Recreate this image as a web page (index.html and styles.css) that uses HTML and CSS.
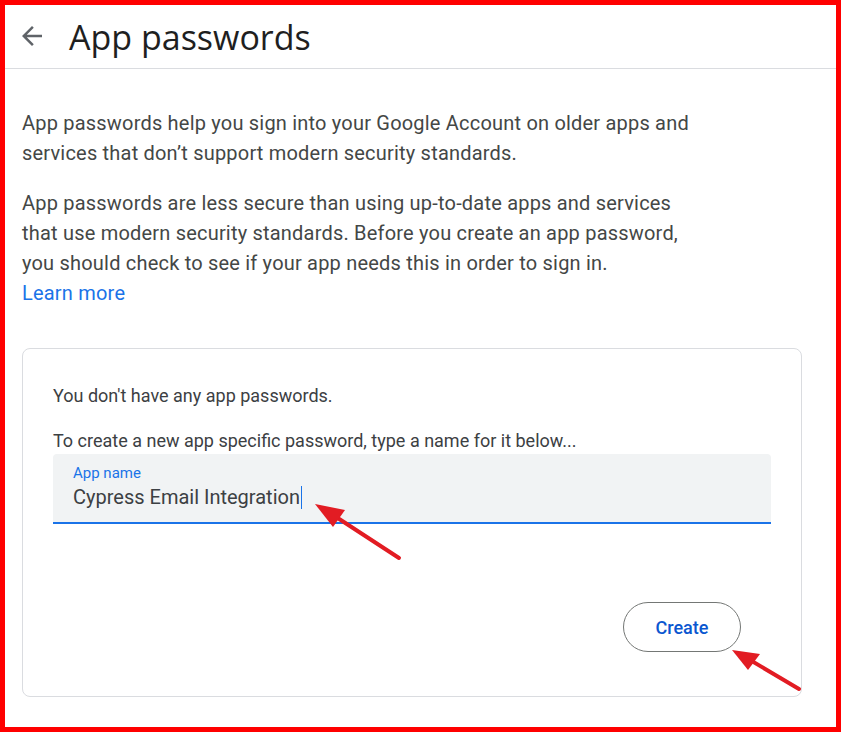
FILE: index.html
```html
<!DOCTYPE html>
<html lang="en">
<head>
<meta charset="utf-8">
<title>App passwords</title>
<link rel="stylesheet" href="styles.css">
</head>
<body>
<div class="frame">
  <header class="topbar">
    <button class="back" aria-label="Back">
      <svg viewBox="0 0 24 24" width="30" height="30"><path d="M20 11H7.83l5.59-5.59L12 4l-8 8 8 8 1.41-1.41L7.83 13H20v-2z" fill="#5f6368"/></svg>
    </button>
    <h1 class="title">App passwords</h1>
  </header>
  <main class="content">
    <p class="intro">App passwords help you sign into your Google Account on older apps and services that don’t support modern security standards.</p>
    <p class="intro">App passwords are less secure than using up-to-date apps and services that use modern security standards. Before you create an app password, you should check to see if your app needs this in order to sign in.<br><a class="link" href="#">Learn more</a></p>
    <section class="card">
      <p class="card-text">You don't have any app passwords.</p>
      <p class="card-text hint">To create a new app specific password, type a name for it below...</p>
      <div class="field">
        <label class="field-label">App name</label>
        <div class="field-value">Cypress Email Integration<span class="caret"></span></div>
      </div>
      <div class="actions">
        <button class="create">Create</button>
      </div>
    </section>
  </main>
  <svg class="annot" width="841" height="732" viewBox="0 0 841 732">
    <g stroke="#e21c23" stroke-width="4" stroke-linecap="round" fill="#e21c23">
      <line x1="399" y1="558" x2="330" y2="513"/>
      <line x1="799" y1="689" x2="745" y2="657"/>
    </g>
    <g fill="#e21c23">
      <polygon points="315,504 345,510 333,527"/>
      <polygon points="732,650 760,654 748,670"/>
    </g>
  </svg>
</div>
</body>
</html>
```
FILE: styles.css
```css
* { box-sizing: border-box; }
html, body { margin: 0; padding: 0; background: #fff; }
body { font-family: Roboto, "Liberation Sans", Arial, sans-serif; color: #1f1f1f; }
.frame {
  position: relative;
  width: 841px;
  height: 732px;
  border: 5px solid #ff0000;
  overflow: hidden;
}
.topbar {
  height: 64px;
  display: flex;
  align-items: center;
  border-bottom: 1px solid #dadce0;
  padding-left: 12px;
}
.back {
  border: 0;
  background: none;
  padding: 0;
  width: 30px;
  height: 30px;
  display: flex;
  margin-top: -1px;
}
.title {
  margin: 0 0 0 22px;
  font-family: "Open Sans", Roboto, sans-serif;
  font-size: 34px;
  font-weight: 400;
  color: #1f1f1f;
}
.content { padding: 39px 34px 0 17px; }
.intro {
  margin: 0 0 20px;
  font-size: 20px;
  line-height: 30px;
  letter-spacing: 0.2px;
  color: #444746;
  max-width: 690px;
}
.link { text-decoration: none; color: #1a73e8; }
.card {
  margin-top: 40px;
  height: 349px;
  border: 1px solid #dadce0;
  border-radius: 8px;
  padding: 35px 30px 0 30px;
}
.card-text {
  margin: 0;
  font-size: 18px;
  line-height: 24px;
  color: #3c4043;
}
.hint { margin-top: 21px; }
.field {
  margin-top: 1px;
  height: 70px;
  background: #f1f3f4;
  border-bottom: 2px solid #1a73e8;
  border-radius: 4px 4px 0 0;
  padding: 10px 20px 0;
}
.field-label {
  display: block;
  font-size: 15px;
  line-height: 18px;
  color: #1a73e8;
}
.field-value {
  margin-top: 2px;
  font-size: 20px;
  line-height: 26px;
  color: #3c4043;
}
.caret {
  display: inline-block;
  width: 1px;
  height: 23px;
  background: #1a73e8;
  vertical-align: -5px;
  margin-left: 1px;
}
.actions {
  display: flex;
  justify-content: flex-end;
  padding-right: 30px;
  margin-top: 78px;
}
.create {
  width: 118px;
  height: 50px;
  border: 1px solid #747775;
  border-radius: 25px;
  background: #fff;
  font-family: Roboto, sans-serif;
  font-size: 18px;
  font-weight: 500;
  color: #0b57d0;
}
.annot { position: absolute; left: -5px; top: -5px; pointer-events: none; }
```
